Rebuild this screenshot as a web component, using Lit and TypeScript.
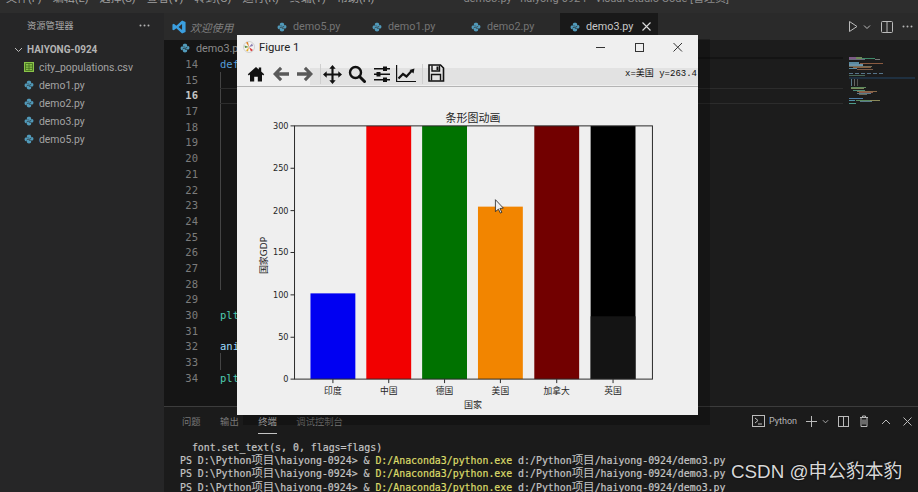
import { LitElement, html, css, svg } from "lit";
import { customElement } from "lit/decorators.js";

const pyPath =
  "M8 1C5.600 1 4.600 2 4.600 3.300V5H8.200v.7H3.200C1.800 5.700.9 6.800.9 8.500c0 1.800.9 2.900 2.200 2.900h1.300V9.700c0-1.300 1-2.300 2.300-2.300h2.900c1 0 1.800-.8 1.800-1.800V3.300C11.400 2 10.300 1 8 1z";
const pyIcon = html`<svg class="py" viewBox="0 0 16 16"><g fill="#519aba"><path d=${pyPath}></path><path transform="rotate(180 8 8)" d=${pyPath}></path></g></svg>`;
const dots = html`<svg class="dots" viewBox="0 0 11 3"><g fill="#b4b4b4"><circle cx="1.500" cy="1.500" r="1"></circle><circle cx="5.500" cy="1.500" r="1"></circle><circle cx="9.500" cy="1.500" r="1"></circle></g></svg>`;

const tabs = [
  { name: "demo5.py", w: 95 },
  { name: "demo1.py", w: 99 },
  { name: "demo2.py", w: 99 },
];

const files = ["demo1.py", "demo2.py", "demo3.py", "demo5.py"];

// line number, then the bit of code that sticks out left of the figure window
const lines: [number, string, string][] = [
  [14, "def", "kw"], [15, "", ""], [16, "", ""], [17, "", ""], [18, "", ""], [19, "", ""], [20, "", ""],
  [21, "", ""], [22, "", ""], [23, "", ""], [24, "", ""], [25, "", ""], [26, "", ""], [27, "", ""],
  [28, "", ""], [29, "", ""], [30, "plt", "cls"], [31, "", ""], [32, "ani", "var"], [33, "", ""], [34, "plt", "cls"],
];

const bars = [
  { x: 310, top: 293, fill: "#0000f2", name: "印度" },
  { x: 366, top: 125, fill: "#f20000", name: "中国" },
  { x: 422, top: 125, fill: "#007200", name: "德国" },
  { x: 478, top: 206, fill: "#f28500", name: "美国" },
  { x: 534.500, top: 125, fill: "#720000", name: "加拿大" },
  { x: 591, top: 125, fill: "#000", name: "英国" },
];

const yTicks = [
  [300, 125], [250, 167.500], [200, 210], [150, 252], [100, 294.500], [50, 337], [0, 379],
];

// minimap rows in page coordinates: y, x, width, height, colour
const minimapRows: [number, number, number, number, string][] = [
  [57, 849, 7, 2, "#7d5a86"], [57, 856, 6, 2, "#6f8a58"], [58, 862, 13, 1, "#3f8a6a"], [59, 875, 5, 1, "#777"],
  [59, 849, 16, 1, "#6a6a7a"], [62, 849, 10, 2, "#5a8aa0"], [63, 860, 23, 1, "#8a5a40"],
  [64, 849, 14, 2, "#6a93a8"], [66, 849, 23, 1, "#76705c"], [67, 853, 18, 1, "#8a6040"], [68, 849, 8, 1, "#5a8aa0"],
  [69, 857, 16, 1, "#7a5a48"], [73, 849, 4, 1, "#56748a"], [73, 855, 4, 1, "#56748a"], [73, 861, 4, 1, "#56748a"],
  [73, 867, 4, 1, "#56748a"], [73, 873, 4, 1, "#56748a"], [73, 879, 4, 1, "#56748a"], [75, 849, 16, 1, "#4a6a5a"],
  [77, 849, 66, 2, "#1f3040"], [79, 851, 1, 7, "#5a7a8a"], [79, 854, 1, 7, "#666"], [79, 857, 1, 7, "#555"],
  [87, 851, 15, 1, "#5f8a5f"], [88, 851, 13, 1, "#7a8a5a"], [90, 853, 12, 1, "#4f8a78"], [91, 857, 20, 1, "#8a6a4a"],
  [92, 859, 14, 1, "#8a5a4a"], [93, 857, 14, 1, "#5a7a8a"], [94, 859, 8, 1, "#6a6a5a"],
  [98, 849, 14, 1, "#4f7fa8"], [100, 849, 6, 1, "#4f8fa8"], [100, 856, 14, 1, "#5a8a5f"], [100, 870, 10, 1, "#8a8a5a"],
  [101, 860, 12, 1, "#5a7a8a"], [103, 849, 7, 1, "#4f9a88"],
];

@customElement("app-root")
export class AppRoot extends LitElement {
  static styles = css`
    :host {
      display: block;
      position: relative;
      width: 918px;
      height: 492px;
      overflow: hidden;
      background: #1c1c1c;
      color: #9a9a9a;
      font-family: Roboto, "Noto Sans CJK SC", sans-serif;
      font-size: 11px;
    }
    .titlebar {
      height: 13px;
      background: #2d2d2d;
      display: flex;
      align-items: flex-end;
      font-size: 11px;
      line-height: 13px;
      color: #a0a0a0;
      overflow: hidden;
    }
    .menu { display: flex; gap: 11px; padding-left: 6px; transform: translateY(-8px); white-space: nowrap; }
    .wintitle { margin-left: 89px; font-size: 11px; transform: translateY(-8px); white-space: nowrap; color: #8a8a8a; }
    .body { display: flex; height: 479px; }
    .side { width: 164px; background: #262627; flex: none; }
    .side-head {
      height: 24px;
      margin-bottom: 3px;
      display: flex;
      align-items: center;
      justify-content: space-between;
      padding: 0 14px 0 27px;
      font-size: 9.300px;
      color: #a8a8a8;
    }
    .dots { width: 11px; height: 3px; display: block; flex: none; }
    .root {
      height: 18px;
      display: flex;
      align-items: center;
      font-size: 10px;
      font-weight: 700;
      color: #b4b4b4;
      padding-left: 14px;
      gap: 4px;
    }
    .file {
      height: 18px;
      display: flex;
      align-items: center;
      gap: 5px;
      padding-left: 24px;
      color: #a3a3a3;
      font-size: 10.400px;
    }
    .py { width: 10px; height: 10px; flex: none; }
    .main { flex: 1; min-width: 0; display: flex; flex-direction: column; }
    .tabs { height: 27px; background: #2a2a2a; display: flex; align-items: stretch; flex: none; }
    .tab { display: flex; align-items: center; gap: 6px; padding-left: 10px; color: #747474; font-size: 10.800px; flex: none; box-sizing: border-box; }
    .tab.welcome { width: 103px; padding-left: 8px; gap: 4px; font-style: italic; color: #808080; }
    .tab.active { width: 98px; background: #191919; color: #c8c8c8; }
    .tab.active .x { margin-left: 3px; width: 9px; height: 9px; }
    .tab-actions { margin-left: auto; display: flex; align-items: center; padding-right: 5px; }
    .crumbs { height: 16px; display: flex; align-items: center; gap: 6px; padding-left: 16px; font-size: 10.800px; color: #8a8a8a; background: linear-gradient(90deg, #151515 73px, #1c1c1c 73px); flex: none; }
    .editor { flex: 1; display: flex; background: linear-gradient(90deg, #151515 73px, #1c1c1c 73px); min-height: 0; position: relative; }
    .gutter {
      width: 56px;
      flex: none;
      padding-top: 1px;
      font: 10.500px/15.700px "DejaVu Sans Mono", monospace;
      color: #7c7c7c;
    }
    .ln { height: 15.700px; display: flex; }
    .ln .num { width: 34px; flex: none; text-align: right; }
    .ln .code { margin-left: 22px; flex: none; white-space: nowrap; }
    .ln.cur .num { color: #c6c6c6; font-weight: 700; }
    .kw { color: #569cd6; }
    .cls { color: #4ec9b0; }
    .var { color: #9cdcfe; }
    .code-area { flex: 1; min-width: 0; position: relative; }
    .scrollshade { position: absolute; left: 0; right: 75px; top: 1px; height: 2px; background: #141414; }
    .guide { position: absolute; left: 0; width: 1px; background: #444; }
    .curline { position: absolute; left: 0; right: 75px; top: 32px; height: 14px; border-top: 1px solid #2c2c2c; border-bottom: 1px solid #2c2c2c; }
    .minimap { position: absolute; right: 0; top: 0; width: 70px; height: 350px; }
    .panel { height: 85px; border-top: 1px solid #3c3c3c; background: #1b1b1b; flex: none; display: flex; flex-direction: column; }
    .panel-head { height: 28px; display: flex; align-items: center; font-size: 9.300px; padding-left: 18px; gap: 19.500px; color: #777; flex: none; position: relative; }
    .panel-head .on { color: #c4c4c4; position: relative; }
    .panel-head .on::after { content: ""; position: absolute; left: 0; right: 0; bottom: -6px; height: 1px; background: #c4c4c4; }
    .panel-actions { margin-left: auto; display: flex; align-items: center; color: #b5b5b5; padding-right: 6px; font-size: 9px; }
    .panel-actions svg { flex: none; display: block; }
    .term { font: 400 9.900px/13.200px "DejaVu Sans Mono", "Noto Sans CJK SC", monospace; color: #c4c4c4; -webkit-text-stroke: 0.2px #c4c4c4; padding: 6px 0 0 16px; white-space: pre; }
    .term .y { color: #dcdc6a; -webkit-text-stroke: 0.2px #dcdc6a; }
    .term .c { font-size: 11.500px; line-height: 13px; -webkit-text-stroke: 0; }

    .figure {
      position: absolute;
      left: 237px;
      top: 35px;
      width: 461px;
      height: 380px;
      background: #efefef;
      box-shadow: 9px 7px 0 3px rgba(0, 0, 0, 0.25);
      color: #222;
      display: flex;
      flex-direction: column;
    }
    .fig-title { height: 27px; box-sizing: border-box; padding: 0 0 3px 6px; display: flex; align-items: center; gap: 4px; font-size: 11.300px; color: #222; flex: none; }
    .win-btns { margin-left: auto; display: flex; }
    .win-btns svg { width: 39px; height: 12px; display: block; }
    .toolbar {
      height: 24px;
      flex: none;
      display: flex;
      align-items: center;
      padding-left: 2px;
      border-bottom: 1px solid #b4b4b4;
      background: linear-gradient(#e2e2e2, #e2e2e2) 73px 6px / 100% 17px no-repeat;
    }
    .grip { width: 3px; height: 20px; background: radial-gradient(circle, #aaa 35%, transparent 40%) 0 0 / 2px 2px; margin-right: 2px; flex: none; }
    .tb { width: 24.500px; height: 20px; display: flex; align-items: center; justify-content: center; flex: none; }
    .ti { width: 18px; height: 18px; display: block; }
    .sep { width: 1px; height: 20px; background: #cfcfcf; margin-left: 2px; flex: none; }
    .sep.last { margin-left: 3px; margin-right: 1.250px; }
    .coord { margin-left: auto; padding: 0 1px 1px 0; font: 9px/12px "Liberation Mono", "Noto Sans CJK SC", monospace; color: #111; white-space: pre; }
    .chart { display: block; flex: 1; min-height: 0; }
    .chart text { font-family: "DejaVu Sans", "Noto Sans CJK SC", sans-serif; fill: #262626; }
    .wm { position: absolute; left: 731px; top: 460px; font: 18.800px/24px "Liberation Sans", "Noto Sans CJK SC", sans-serif; color: #d8d8d8; text-shadow: 0 0 2px #000; white-space: nowrap; }
  `;

  renderChart() {
    return svg`
      <svg class="chart" viewBox="237 86 461 329" width="461" height="329">
        ${bars.map((b) => svg`<rect x=${b.x} y=${b.top} width="45" height=${379 - b.top} fill=${b.fill}></rect>`)}
        <rect x="591" y="316" width="45" height="63" fill="#141414"></rect>
        <rect x="294" y="125" width="359" height="254" fill="none" stroke="#2a2a2a" stroke-width="1"></rect>
        ${yTicks.map(([v, y]) => svg`
          <line x1="290" x2="294" y1=${y} y2=${y} stroke="#2a2a2a"></line>
          <text x="288" y=${y + 3} font-size="8.200" text-anchor="end">${v}</text>`)}
        ${bars.map((b) => svg`
          <line x1=${b.x + 22.500} x2=${b.x + 22.500} y1="379" y2="383" stroke="#2a2a2a"></line>
          <text x=${b.x + 22.500} y="394" font-size="8.800" text-anchor="middle">${b.name}</text>`)}
        <text x="473" y="408" font-size="9" text-anchor="middle">国家</text>
        <text x="473" y="121" font-size="11" text-anchor="middle">条形图动画</text>
        <text x="266" y="255" font-size="9" text-anchor="middle" transform="rotate(-90 266 255)">国家GDP</text>
        <path d="M495.500 199v12l3-2.500 2 4 1.500-.8-2-3.800 3.500-.4z" fill="#eee" stroke="#222" stroke-width=".8"></path>
      </svg>`;
  }

  renderToolbar() {
    return html`
      <div class="toolbar">
        <div class="grip"></div>
        <div class="tb"><svg class="ti" viewBox="0 0 18 18"><path fill="#111" d="M9 2L0.800 9.300l1 1.200L3 9.500V16.500h4.200v-4.800h3.600v4.800H15V9.500l1.200 1 1-1.200-3-2.700V2.600h-2.400v2L9 2z"/></svg></div>
        <div class="tb"><svg class="ti" viewBox="0 0 18 18"><path fill="#5a5a5a" d="M8 1.800L1 9l7 7.200 2.200-2.200-3.300-3.300H17V7.300H6.900L10.200 4z"/></svg></div>
        <div class="tb"><svg class="ti" viewBox="0 0 18 18"><path fill="#5a5a5a" d="M10 1.800L17 9l-7 7.200-2.200-2.200 3.300-3.300H1V7.300h10.100L7.800 4z"/></svg></div>
        <div class="sep"></div>
        <div class="tb"><svg class="ti" style="width:19px;height:19px" viewBox="0 0 18 18"><path fill="#111" d="M9 0l3 3.500h-2v4.500h4.500v-2L18 9l-3.500 3v-2H10v4.500h2L9 18l-3-3.500h2V10H3.500v2L0 9l3.500-3v2H8V3.500H6z"/></svg></div>
        <div class="tb"><svg class="ti" viewBox="0 0 18 18"><circle cx="7.500" cy="7.500" r="5.500" fill="none" stroke="#111" stroke-width="2.400"/><path d="M11.500 11.500L16.500 16.500" stroke="#111" stroke-width="3" stroke-linecap="round"/></svg></div>
        <div class="tb"><svg class="ti" viewBox="0 0 18 18" fill="#111"><rect x="1" y="3" width="16" height="1.500"/><rect x="1" y="8.500" width="16" height="1.500"/><rect x="1" y="14" width="16" height="1.500"/><rect x="10" y="1.500" width="4" height="4.500"/><rect x="3.500" y="7" width="4" height="4.500"/><rect x="10" y="12.500" width="4" height="4.500"/></svg></div>
        <div class="tb"><svg class="ti" style="width:20px" viewBox="0 0 20 18"><path d="M.6 0V16.500H20" fill="none" stroke="#111" stroke-width="1.200"/><path d="M2.500 13.500l4.500-4.500 3.500 2.500 5-5.500" fill="none" stroke="#111" stroke-width="2.200"/><path d="M13.500 5l5-1.500-1 5z" fill="#111"/></svg></div>
        <div class="sep last"></div>
        <div class="tb"><svg class="ti" style="margin-top:-3px" viewBox="0 0 18 18"><path d="M2 1h11.500l3 3V17H2z" fill="none" stroke="#111" stroke-width="1.600"/><path d="M5 1.500v5.500h7.500V1.500M4.500 16.500v-6h9v6" fill="none" stroke="#111" stroke-width="1.400"/><rect x="9.500" y="2.500" width="2" height="3.500" fill="#111"/></svg></div>
        <div class="coord">x=美国 y=263.4</div>
      </div>`;
  }

  renderFigure() {
    return html`
      <div class="figure">
        <div class="fig-title">
          <svg width="12" height="12" viewBox="0 0 12 12">
            <circle cx="6" cy="6" r="5.500" fill="#f4f4f4" stroke="#bbb" stroke-width=".6"></circle>
            <path d="M6 6L3 1.500 5 1z" fill="#e08020"></path><path d="M6 6L1.500 4.500 2 7z" fill="#5f8f3f"></path>
            <path d="M6 6L10 9 8 10.500z" fill="#d84040"></path><path d="M6 6L3 9.500 5 10.500z" fill="#e8b030"></path>
            <path d="M6 6L9 2.500 10 5z" fill="#8a7fb0"></path>
          </svg>
          <span>Figure 1</span>
          <div class="win-btns">
            <svg viewBox="0 0 39 12"><path d="M15 6.500h9" stroke="#333"></path></svg>
            <svg viewBox="0 0 39 12"><rect x="15.500" y="2.500" width="8" height="8" fill="none" stroke="#333"></rect></svg>
            <svg viewBox="0 0 39 12"><path d="M14.500 2l8.500 8.500M23 2l-8.500 8.500" stroke="#333"></path></svg>
          </div>
        </div>
        ${this.renderToolbar()}
        ${this.renderChart()}
      </div>`;
  }

  renderTermLine() {
    return html`PS D:\\Python<span class="c">项目</span>\\haiyong-0924> &amp; <span class="y">D:/Anaconda3/python.exe</span> d:/Python<span class="c">项目</span>/haiyong-0924/demo3.py`;
  }

  render() {
    return html`
      <div class="titlebar">
        <div class="menu"><span>文件(F)</span><span>编辑(E)</span><span>选择(S)</span><span>查看(V)</span><span>转到(G)</span><span>运行(R)</span><span>终端(T)</span><span>帮助(H)</span></div>
        <div class="wintitle">demo3.py - haiyong-0924 - Visual Studio Code [管理员]</div>
      </div>
      <div class="body">
        <aside class="side">
          <div class="side-head"><span>资源管理器</span>${dots}</div>
          <div class="root">
            <svg width="9" height="9" viewBox="0 0 9 9"><path d="M1 3l3.500 3.500L8 3" fill="none" stroke="#bbb"></path></svg>
            <span>HAIYONG-0924</span>
          </div>
          <div class="file">
            <svg class="py" viewBox="0 0 10 10"><rect width="10" height="10" fill="#8bc34a"></rect><path d="M1.500 1.500h7v7h-7zM1.500 4h7M1.500 6.300h7M5 1.500v7" fill="none" stroke="#3f6a1c" stroke-width=".8"></path></svg>
            <span>city_populations.csv</span>
          </div>
          ${files.map((f) => html`<div class="file">${pyIcon}<span>${f}</span></div>`)}
        </aside>
        <div class="main">
          <div class="tabs">
            <div class="tab welcome">
              <svg width="14" height="14" viewBox="0 0 16 16"><path fill-rule="evenodd" fill="#3b9fe0" d="M11.500 .5L15.500 2.400V13.600L11.500 15.500 5 9.500 2 11.800 .5 11V5L2 4.200 5 6.500zM11.500 4.500L7.500 8l4 3.500z"></path></svg>
              <span>欢迎使用</span>
            </div>
            ${tabs.map((t) => html`<div class="tab" style="width:${t.w}px">${pyIcon}<span>${t.name}</span></div>`)}
            <div class="tab active">${pyIcon}<span>demo3.py</span><svg class="x" viewBox="0 0 9 9"><path d="M.5 .5l8 8M8.500 .5l-8 8" stroke="#ddd" stroke-width="1.100"></path></svg></div>
            <div class="tab-actions">
              <svg width="12" height="13" viewBox="0 0 12 13"><path d="M2.500 1.500l7.500 5-7.500 5z" fill="none" stroke="#bbb"></path></svg>
              <svg width="8" height="8" viewBox="0 0 8 8" style="margin-left:4px"><path d="M1 2.500l3 3 3-3" fill="none" stroke="#bbb"></path></svg>
              <svg width="12" height="12" viewBox="0 0 12 12" style="margin-left:9.500px;margin-right:9.500px"><rect x=".5" y=".5" width="11" height="11" rx="1" fill="none" stroke="#bbb"></rect><path d="M6 .5v11" stroke="#bbb"></path></svg>
              ${dots}
            </div>
          </div>
          <div class="crumbs">${pyIcon}<span>demo3.py</span></div>
          <div class="editor">
            <div class="gutter">
              ${lines.map(([n, code, cls]) => html`<div class="ln ${n === 16 ? "cur" : ""}"><span class="num">${n}</span><span class="code ${cls}">${code}</span></div>`)}
            </div>
            <div class="code-area">
              <div class="scrollshade"></div>
              <div class="guide" style="top:16px;height:218px"></div>
              <div class="guide" style="top:297px;height:17px"></div>
              <div class="curline"></div>
              <svg class="minimap" viewBox="848 56 70 350">
                ${minimapRows.map(([y, x, w, h, c]) => svg`<rect x=${x} y=${y} width=${w} height=${h} fill=${c}></rect>`)}
              </svg>
            </div>
          </div>
          <div class="panel">
            <div class="panel-head">
              <span>问题</span><span>输出</span><span class="on">终端</span><span>调试控制台</span>
              <div class="panel-actions">
                <svg width="13" height="12" viewBox="0 0 13 12"><rect x=".5" y=".5" width="12" height="11" fill="none" stroke="#bbb"></rect><path d="M3 3l3 2.500L3 8M6 9h4" fill="none" stroke="#bbb"></path></svg>
                <span style="margin-left:4px">Python</span>
                <svg width="11" height="11" viewBox="0 0 11 11" style="margin-left:9px"><path d="M5.500 0v11M0 5.500h11" stroke="#bbb"></path></svg>
                <svg width="7" height="7" viewBox="0 0 8 8" style="margin-left:5px"><path d="M1 2.500l3 3 3-3" fill="none" stroke="#bbb"></path></svg>
                <svg width="11" height="11" viewBox="0 0 11 11" style="margin-left:9px"><rect x=".5" y=".5" width="10" height="10" fill="none" stroke="#bbb"></rect><path d="M5.500 .5v10" stroke="#bbb"></path></svg>
                <svg width="10" height="12" viewBox="0 0 10 12" style="margin-left:10px"><path d="M1 2.500h8M3.500 2.500V1h3v1.500M2 2.500v9h6v-9M4 4.500v5M6 4.500v5" fill="none" stroke="#bbb"></path></svg>
                <svg width="10" height="7" viewBox="0 0 10 7" style="margin-left:12px"><path d="M1 6l4-4 4 4" fill="none" stroke="#bbb"></path></svg>
                <svg width="9" height="9" viewBox="0 0 9 9" style="margin-left:12px"><path d="M.5 .5l8 8M8.500 .5l-8 8" stroke="#bbb"></path></svg>
              </div>
            </div>
            <div class="term">  font.set_text(s, 0, flags=flags)
${this.renderTermLine()}
${this.renderTermLine()}
${this.renderTermLine()}</div>
          </div>
        </div>
      </div>
      ${this.renderFigure()}
      <div class="wm">CSDN @申公豹本豹</div>
    `;
  }
}
